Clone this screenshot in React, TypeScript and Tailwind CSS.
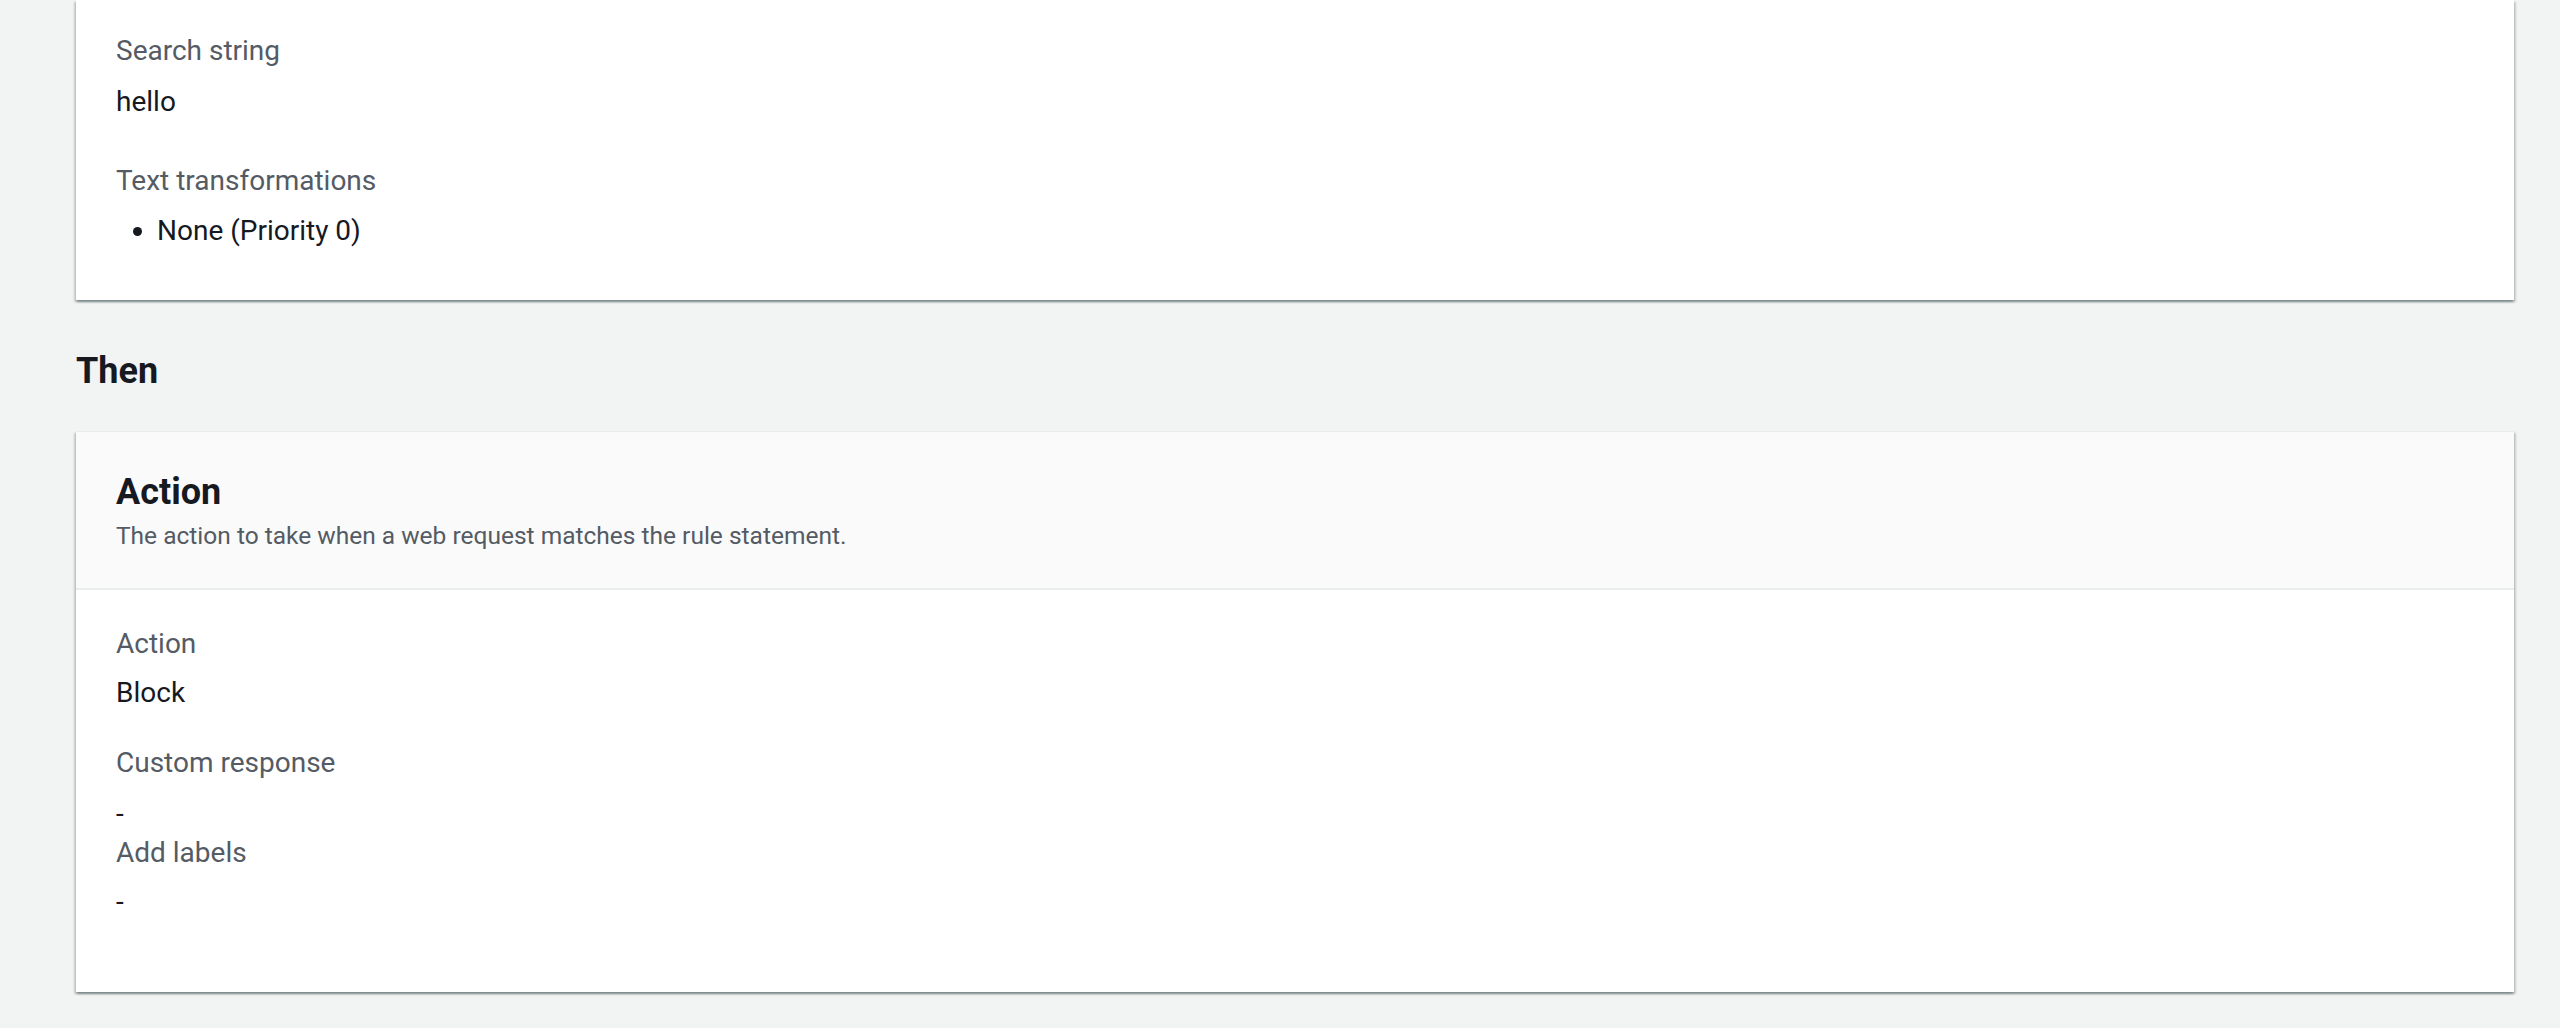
import React from "react";

function Label({ children, className = "" }: { children: React.ReactNode; className?: string }) {
  return <div className={"text-[28px] leading-[44px] text-[#545b64] " + className}>{children}</div>;
}

function Value({ children, className = "" }: { children: React.ReactNode; className?: string }) {
  return <div className={"text-[28px] leading-[44px] text-[#16191f] " + className}>{children}</div>;
}

const cardShadow =
  "shadow-[0_2px_2px_0_rgba(0,28,36,0.3),2px_2px_2px_0_rgba(0,28,36,0.15),-2px_2px_2px_0_rgba(0,28,36,0.15)]";

export default function App() {
  return (
    <div className="min-h-screen bg-[#f2f3f3] pl-[76px] pr-[46px] font-['Roboto',sans-serif] antialiased">
      <div className={"bg-white pt-[29px] px-[40px] pb-[47px] " + cardShadow}>
        <Label>Search string</Label>
        <Value className="mt-[7px]">hello</Value>
        <Label className="mt-[35px]">Text transformations</Label>
        <ul className="mt-[6px] list-disc pl-[41px] text-[28px] leading-[44px] text-[#16191f]">
          <li>None (Priority 0)</li>
        </ul>
      </div>

      <h2 className="mt-[47px] text-[36px] leading-[48px] font-bold text-[#16191f]">Then</h2>

      <div className={"mt-[36px] bg-white border-t border-[#eaeded] " + cardShadow}>
        <div className="bg-[#fafafa] pt-[36px] px-[40px] pb-[36px] border-b-2 border-[#eaeded]">
          <div className="text-[36px] leading-[48px] font-bold text-[#16191f]">Action</div>
          <div className="mt-[4px] text-[24.5px] leading-[32px] text-[#545b64]">
            The action to take when a web request matches the rule statement.
          </div>
        </div>
        <div className="pt-[32px] px-[40px] pb-[68px]">
          <Label>Action</Label>
          <Value className="mt-[5px]">Block</Value>
          <Label className="mt-[26px]">Custom response</Label>
          <div className="mt-[11px] text-[28px] leading-[35px] text-[#16191f]">-</div>
          <Label>Add labels</Label>
          <Value className="mt-[5px]">-</Value>
        </div>
      </div>
    </div>
  );
}
